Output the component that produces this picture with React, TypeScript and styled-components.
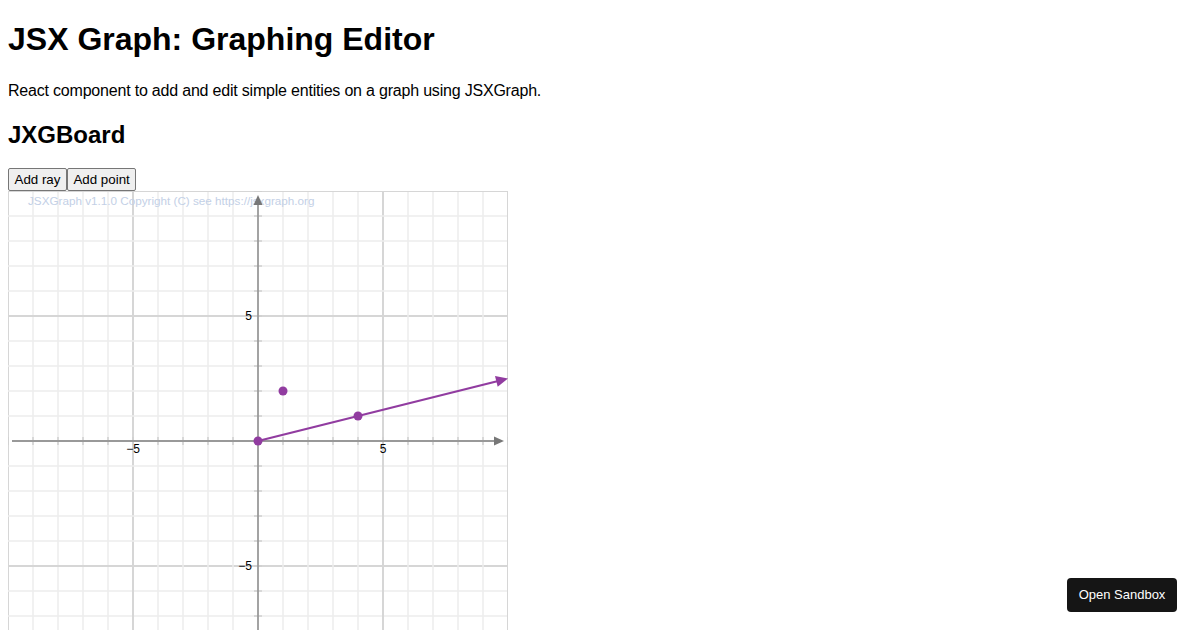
import React from 'react'
import styled, { createGlobalStyle } from 'styled-components'

const GlobalStyle = createGlobalStyle`
  html {
    overflow: hidden;
  }
  body {
    margin: 0;
    padding: 0 8px;
    font-family: "Liberation Sans", Arial, sans-serif;
    color: #000;
    background: #fff;
  }
`

const Title = styled.h1`
  font-size: 32px;
  font-weight: 700;
  margin: 20.5px 0 24.5px;
`

const Lead = styled.p`
  font-size: 16px;
  letter-spacing: -0.2px;
  margin: 16px 0;
`

const SubTitle = styled.h2`
  font-size: 24px;
  font-weight: 700;
  margin: 21px 0 19px;
`

const Toolbar = styled.div`
  display: flex;
`

const ToolButton = styled.button`
  font-family: "Liberation Sans", Arial, sans-serif;
  font-size: 13.333px;
  color: #000;
  background: #efefef;
  border: 1px solid #767676;
  border-radius: 2px;
  padding: 2px 5.5px;
  height: 23px;
  cursor: pointer;
`

const Board = styled.div`
  width: 500px;
  height: 500px;
  overflow: hidden;
`

const SandboxButton = styled.button`
  position: fixed;
  right: 23px;
  bottom: 18px;
  width: 110px;
  height: 34px;
  padding: 0 0 2px;
  background: #151515;
  color: #fff;
  border: none;
  border-radius: 4px;
  font-family: "Liberation Sans", Arial, sans-serif;
  font-size: 13px;
  cursor: pointer;
`

const UNIT = 25
const O = 250
const sx = (u: number) => O + u * UNIT
const sy = (v: number) => O - v * UNIT
const purple = '#913ca0'

function Graph() {
  const steps = Array.from({ length: 21 }, (_, i) => i - 10)
  // ray from (0,0) through (4,1) until the right edge
  const rayEnd = { x: 500, y: sy(2.5) }
  const ang = Math.atan2(rayEnd.y - sy(0), rayEnd.x - sx(0))
  const head = (len: number, w: number) => {
    const bx = rayEnd.x - len * Math.cos(ang)
    const by = rayEnd.y - len * Math.sin(ang)
    const px = -Math.sin(ang) * w
    const py = Math.cos(ang) * w
    return `${rayEnd.x},${rayEnd.y} ${bx + px},${by + py} ${bx - px},${by - py}`
  }
  return (
    <svg width="500" height="500" viewBox="0 0 500 500">
      <rect x="0.5" y="0.5" width="499" height="499" fill="#fff" stroke="#d4d4d4" />
      {steps.map((s) => {
        const major = s % 5 === 0 && s !== 0
        if (s === 0) return null
        return (
          <g key={s} stroke={major ? '#d6d6d6' : '#ececec'} strokeWidth={major ? 2 : 1.5}>
            <line x1={sx(s)} y1={0} x2={sx(s)} y2={500} />
            <line x1={0} y1={sy(s)} x2={500} y2={sy(s)} />
          </g>
        )
      })}
      {steps.map((s) =>
        s === 0 ? null : (
          <g key={'t' + s} stroke="#cfcfcf" strokeWidth={1.5}>
            <line x1={sx(s)} y1={O - 4} x2={sx(s)} y2={O + 4} />
            <line x1={O - 4} y1={sy(s)} x2={O + 4} y2={sy(s)} />
          </g>
        )
      )}
      <text x="20" y="14" fontSize="11.7" fill="#c3d0e6" fontFamily="Liberation Sans, Arial, sans-serif">
        JSXGraph v1.1.0 Copyright (C) see https://jsxgraph.org
      </text>
      <g stroke="#999" strokeWidth={1.8}>
        <line x1={4} y1={O} x2={487} y2={O} />
        <line x1={O} y1={13} x2={O} y2={496} />
      </g>
      <polygon points="496,250 486,245.5 486,254.5" fill="#777" />
      <polygon points="250,4 245.5,14 254.5,14" fill="#777" />
      <g fontSize="12" fontFamily="Liberation Sans, Arial, sans-serif" fill="#000">
        <text x={sx(-5)} y={262} textAnchor="middle">−5</text>
        <text x={sx(5)} y={262} textAnchor="middle">5</text>
        <text x={244} y={sy(5) + 4} textAnchor="end">5</text>
        <text x={244} y={sy(-5) + 4} textAnchor="end">−5</text>
      </g>
      <line x1={sx(0)} y1={sy(0)} x2={rayEnd.x - 6 * Math.cos(ang)} y2={rayEnd.y - 6 * Math.sin(ang)} stroke={purple} strokeWidth={2.2} />
      <polygon points={head(12, 5.5)} fill={purple} />
      <circle cx={sx(0)} cy={sy(0)} r={4.5} fill={purple} />
      <circle cx={sx(4)} cy={sy(1)} r={4.5} fill={purple} />
      <circle cx={sx(1)} cy={sy(2)} r={4.5} fill={purple} />
    </svg>
  )
}

export default function App() {
  return (
    <>
      <GlobalStyle />
      <Title>JSX Graph: Graphing Editor</Title>
      <Lead>React component to add and edit simple entities on a graph using JSXGraph.</Lead>
      <SubTitle>JXGBoard</SubTitle>
      <Toolbar>
        <ToolButton>Add ray</ToolButton>
        <ToolButton>Add point</ToolButton>
      </Toolbar>
      <Board>
        <Graph />
      </Board>
      <SandboxButton>Open Sandbox</SandboxButton>
    </>
  )
}
